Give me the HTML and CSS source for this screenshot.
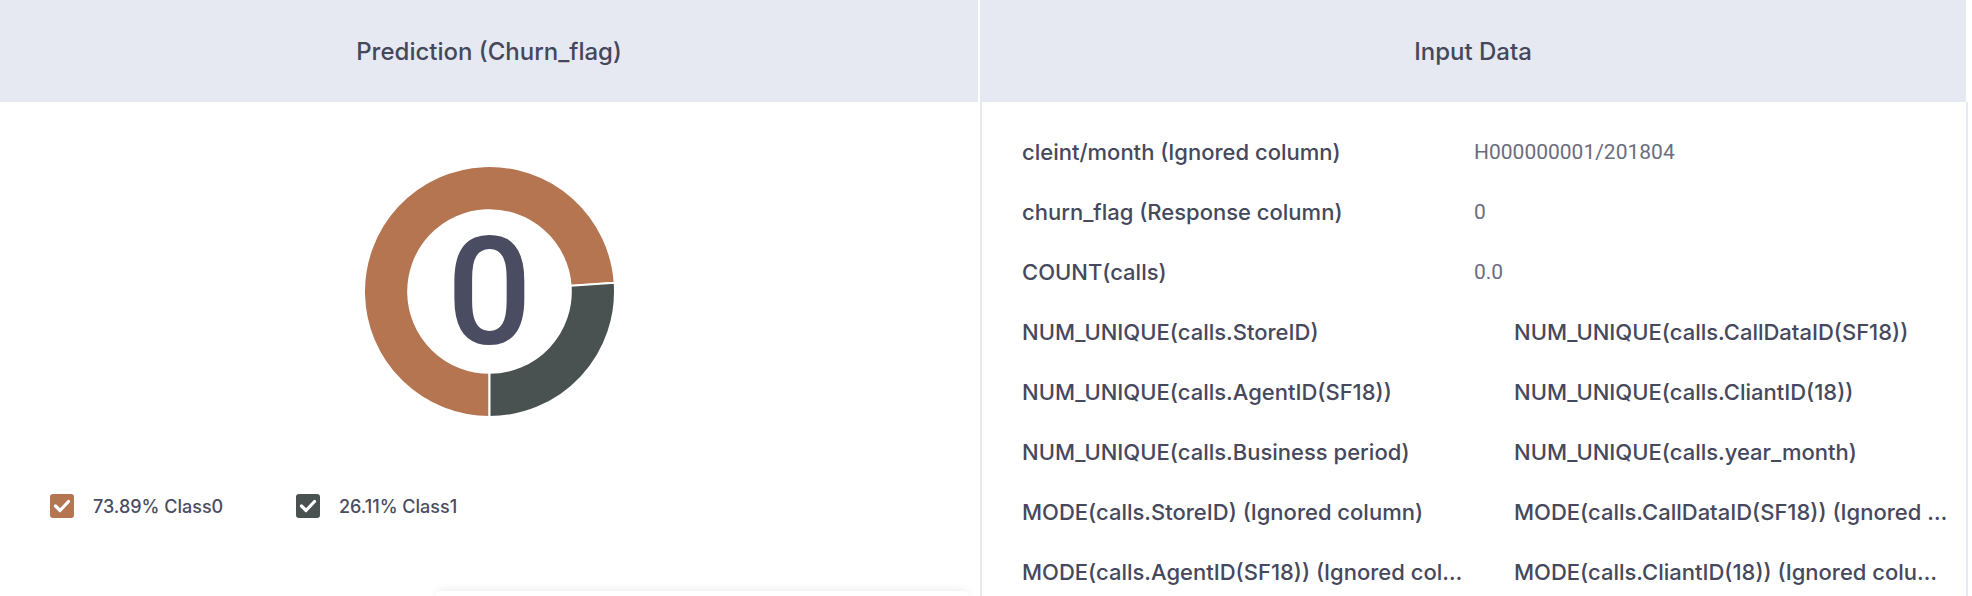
FILE: index.html
```html
<!DOCTYPE html>
<html>
<head>
<meta charset="utf-8">
<link rel="stylesheet" href="styles.css">
</head>
<body>
<div class="page">
  <section class="panel panel-left">
    <div class="panel-head">Prediction (Churn_flag)</div>
    <div class="panel-body left-body">
      <div class="donut">
        <svg class="donut-svg" width="251" height="251" viewBox="0 0 250 250">
          <path d="M125 250 A125 125 0 1 1 249.7 116.28 L205.8 119.35 A81 81 0 1 0 125 206 Z" fill="#b57551" stroke="#fff" stroke-width="2"/>
          <path d="M249.7 116.28 A125 125 0 0 1 125 250 L125 206 A81 81 0 0 0 205.8 119.35 Z" fill="#4a5151" stroke="#fff" stroke-width="2"/>
        </svg>
        <div class="donut-label">0</div>
      </div>
      <div class="legend">
        <div class="legend-item">
          <span class="check check-orange"><svg width="24" height="24" viewBox="0 0 24 24"><path d="M5.5 12 L10 16.5 L18.5 7.5" fill="none" stroke="#fff" stroke-width="3.2" stroke-linecap="round" stroke-linejoin="round"/></svg></span>
          <span class="legend-text">73.89% Class0</span>
        </div>
        <div class="legend-item">
          <span class="check check-dark"><svg width="24" height="24" viewBox="0 0 24 24"><path d="M5.5 12 L10 16.5 L18.5 7.5" fill="none" stroke="#fff" stroke-width="3.2" stroke-linecap="round" stroke-linejoin="round"/></svg></span>
          <span class="legend-text">26.11% Class1</span>
        </div>
      </div>
      <div class="card"></div>
    </div>
  </section>
  <section class="panel panel-right">
    <div class="panel-head head-right">Input Data</div>
    <div class="panel-body right-body">
      <div class="kv-row"><span class="kv-label">cleint/month (Ignored column)</span><span class="kv-value">H000000001/201804</span></div>
      <div class="kv-row"><span class="kv-label">churn_flag (Response column)</span><span class="kv-value">0</span></div>
      <div class="kv-row"><span class="kv-label">COUNT(calls)</span><span class="kv-value">0.0</span></div>
      <div class="feat-grid">
        <div class="feat">NUM_UNIQUE(calls.StoreID)</div>
        <div class="feat">NUM_UNIQUE(calls.CallDataID(SF18))</div>
        <div class="feat">NUM_UNIQUE(calls.AgentID(SF18))</div>
        <div class="feat">NUM_UNIQUE(calls.CliantID(18))</div>
        <div class="feat">NUM_UNIQUE(calls.Business period)</div>
        <div class="feat">NUM_UNIQUE(calls.year_month)</div>
        <div class="feat">MODE(calls.StoreID) (Ignored column)</div>
        <div class="feat">MODE(calls.CallDataID(SF18)) (Ignored column)</div>
        <div class="feat">MODE(calls.AgentID(SF18)) (Ignored column)</div>
        <div class="feat">MODE(calls.CliantID(18)) (Ignored column)</div>
      </div>
    </div>
  </section>
</div>
</body>
</html>
```
FILE: styles.css
```css
* { box-sizing: border-box; }
html, body {
  margin: 0;
  padding: 0;
  background: #fff;
  overflow: hidden;
}
body {
  font-family: Inter, "Noto Sans", "Liberation Sans", sans-serif;
  color: #46485c;
  width: 1972px;
  height: 596px;
}
.page {
  display: flex;
  gap: 2px;
  height: 596px;
  overflow: hidden;
}
.panel {
  display: flex;
  flex-direction: column;
  overflow: hidden;
}
.panel-left { width: 978px; }
.panel-right { width: 988px; }
.panel-head {
  height: 102px;
  background: #e6e9f2;
  display: flex;
  align-items: center;
  justify-content: center;
  font-size: 24px;
  font-weight: 500;
  color: #45475b;
  flex: none;
}
.head-right { width: 986px; }
.panel-body { flex: 1; }
.left-body {
  padding-top: 64px;
  display: flex;
  flex-direction: column;
}
.donut {
  position: relative;
  width: 251px;
  height: 251px;
  margin-left: 364px;
}
.donut-svg { display: block; }
.donut-label {
  position: absolute;
  inset: 0;
  display: flex;
  align-items: center;
  justify-content: center;
  font-family: Roboto, "Liberation Sans", sans-serif;
  font-weight: 500;
  font-size: 150px;
  line-height: 1;
  color: #4a4c62;
  padding-top: 2px;
}
.legend {
  display: flex;
  margin-top: 77px;
  padding-left: 50px;
  height: 24px;
}
.legend-item {
  display: flex;
  align-items: center;
  gap: 19px;
  width: 246px;
}
.check {
  width: 24px;
  height: 24px;
  border-radius: 3px;
  display: block;
  flex: none;
}
.check svg { display: block; }
.check-orange { background: #b57551; }
.check-dark { background: #4a5151; }
.legend-text {
  font-size: 18px;
  font-weight: 500;
  color: #4a4c62;
}
.card {
  margin-top: 73px;
  margin-left: 436px;
  width: 532px;
  height: 5px;
  background: #fff;
  border-radius: 8px 8px 0 0;
  box-shadow: 0 0 8px rgba(0, 0, 0, 0.12);
  flex: none;
}
.right-body {
  border-left: 2px solid #e6e9f2;
  border-right: 2px solid #e6e9f2;
  padding: 20px 10px 0 40px;
}
.kv-row {
  display: flex;
  align-items: center;
  height: 60px;
}
.kv-label {
  width: 452px;
  font-size: 22px;
  font-weight: 500;
  color: #46485c;
}
.kv-value {
  font-family: Roboto, "Liberation Sans", sans-serif;
  font-size: 21px;
  font-weight: 400;
  color: #6a6d80;
}
.feat-grid {
  display: grid;
  grid-template-columns: 448px 442px;
  column-gap: 44px;
  grid-auto-rows: 60px;
}
.feat {
  display: block;
  line-height: 60px;
  font-size: 22px;
  font-weight: 500;
  color: #46485c;
  white-space: nowrap;
  overflow: hidden;
  text-overflow: ellipsis;
  min-width: 0;
}
```
